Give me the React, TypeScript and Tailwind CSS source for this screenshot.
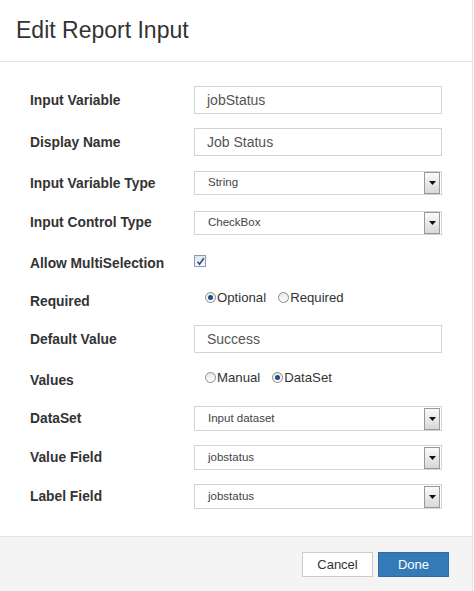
const font = { fontFamily: '"Liberation Sans", Arial, sans-serif' }

function Label({ children, className = 'pt-[2px]' }: { children: React.ReactNode; className?: string }) {
    return <div className={`w-[164px] shrink-0 text-[13.8px] font-bold text-[#333] ${className}`}>{children}</div>
}

function TextBox({ value }: { value: string }) {
    return (
        <div className="flex h-[28px] w-[260px] items-center border border-[#d4d4d4] bg-white pl-[12px] text-[14px] text-[#555]">
            {value}
        </div>
    )
}

function SelectBox({ value, h = 'h-[24px]' }: { value: string; h?: string }) {
    return (
        <div className={`flex ${h} w-[260px] items-center justify-between border border-[#d4d4d4] bg-white pl-[13px] pr-[1px] text-[11.5px] text-[#444]`}>
            <span>{value}</span>
            <div className="flex h-[22px] w-[16px] items-center justify-center border border-[#999] bg-gradient-to-b from-[#fafafa] to-[#d8d8d8]">
                <svg width="7" height="4" viewBox="0 0 7 4">
                    <path d="M0 0h7L3.5 4z" fill="#111" />
                </svg>
            </div>
        </div>
    )
}

function Radio({ checked, label }: { checked?: boolean; label: string }) {
    return (
        <span className="flex items-center text-[13.2px] text-[#333]">
            <span className="flex h-[11px] w-[11px] items-center justify-center rounded-full border border-[#8a8a8a] bg-gradient-to-b from-[#e8e8e8] to-[#ffffff]">
                {checked && <span className="h-[5px] w-[5px] rounded-full bg-[#1d4f8a]" />}
            </span>
            <span className="ml-[1px]">{label}</span>
        </span>
    )
}

export default function App() {
    return (
        <div className="h-[591px] w-[473px] border-r border-[#e2e2e2] bg-white" style={font}>
            <div className="flex h-[62px] items-center border-b border-[#e5e5e5] pl-[16px]">
                <h1 className="text-[23px] text-[#333]">Edit Report Input</h1>
            </div>

            <div className="flex flex-col px-[30px] pt-[17px] pb-[20px]">
                <div className="flex h-[42px] items-center">
                    <Label>Input Variable</Label>
                    <TextBox value="jobStatus" />
                </div>
                <div className="flex h-[42px] items-center">
                    <Label>Display Name</Label>
                    <TextBox value="Job Status" />
                </div>
                <div className="flex h-[40px] items-center">
                    <Label>Input Variable Type</Label>
                    <SelectBox value="String" />
                </div>
                <div className="flex h-[39px] items-center">
                    <Label>Input Control Type</Label>
                    <SelectBox value="CheckBox" />
                </div>
                <div className="flex h-[38px] items-center">
                    <Label className="pt-[7px]">Allow MultiSelection</Label>
                    <span className="flex h-[12px] w-[12px] items-center justify-center border border-[#8d9bb0] bg-gradient-to-b from-[#dfe6ef] to-[#f8f9fb]">
                        <svg width="9" height="9" viewBox="0 0 9 9">
                            <path d="M1.5 4.8l2 2.4L7.8 1.3" stroke="#2a4d8a" strokeWidth="1.6" fill="none" />
                        </svg>
                    </span>
                </div>
                <div className="flex h-[39px] items-center">
                    <Label className="pt-[5px]">Required</Label>
                    <div className="flex items-center gap-[12px] pl-[11px] pb-[4px]">
                        <Radio checked label="Optional" />
                        <Radio label="Required" />
                    </div>
                </div>
                <div className="flex h-[40px] items-center">
                    <Label>Default Value</Label>
                    <TextBox value="Success" />
                </div>
                <div className="flex h-[40px] items-center">
                    <Label className="pt-[5px]">Values</Label>
                    <div className="flex items-center gap-[12px] pl-[11px] pb-[3px]">
                        <Radio label="Manual" />
                        <Radio checked label="DataSet" />
                    </div>
                </div>
                <div className="flex h-[39px] items-center">
                    <Label>DataSet</Label>
                    <SelectBox value="Input dataset" h="h-[25px]" />
                </div>
                <div className="flex h-[39px] items-center">
                    <Label>Value Field</Label>
                    <SelectBox value="jobstatus" h="h-[25px]" />
                </div>
                <div className="flex h-[39px] items-center">
                    <Label>Label Field</Label>
                    <SelectBox value="jobstatus" h="h-[25px]" />
                </div>
            </div>

            <div className="flex h-[56px] items-center justify-end gap-[5px] border-t border-[#e5e5e5] bg-[#f4f4f4] pr-[23px]">
                <button className="h-[25px] w-[71px] border border-[#ccc] bg-white text-[13px] text-[#333]">Cancel</button>
                <button className="h-[25px] w-[71px] border border-[#2e6da4] bg-[#337ab7] text-[13px] text-white">Done</button>
            </div>
        </div>
    )
}
